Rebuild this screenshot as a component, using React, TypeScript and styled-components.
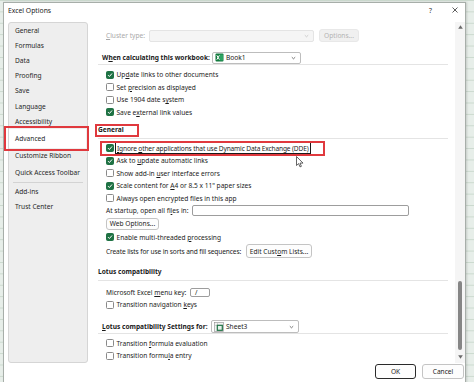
import React from "react";
import styled, { createGlobalStyle } from "styled-components";

const GlobalStyle = createGlobalStyle`
  html, body { margin: 0; padding: 0; }
  body {
    width: 474px; height: 382px; overflow: hidden;
    font-family: "Noto Sans", "Open Sans", sans-serif;
    color: #1b1b1b;
  }
  * { box-sizing: border-box; }
`;

const Screen = styled.div`
  width: 474px;
  height: 382px;
  overflow: hidden;
  padding: 2px 0 0 3px;
  background-color: #e7eee9;
  background-image: linear-gradient(#cbd9ce 1px, transparent 1px);
  background-size: 100% 11.4px;
`;

const Dialog = styled.div`
  width: 463px;
  height: 392px;
  background: #ffffff;
  border: 1px solid #a7aea9;
  box-shadow: 1px 0 2px rgba(0, 0, 0, 0.15);
  display: flex;
  flex-direction: column;
  font-size: 6.6px;
`;

const TitleBar = styled.div`
  height: 14px;
  display: flex;
  align-items: center;
  padding-left: 4px;
  font-size: 6.8px;
`;

const TitleButtons = styled.div`
  margin-left: auto;
  display: flex;
  align-items: center;
  gap: 20px;
  padding-right: 7px;
  color: #333;
`;

const Body = styled.div`
  display: flex;
  margin-top: 5px;
  height: 341px;
`;

const Nav = styled.div`
  margin-left: 4px;
  width: 80px;
  height: 341px;
  background: #eeeeee;
  border: 1px solid #d5d5d5;
  border-radius: 3px;
  display: flex;
  flex-direction: column;
`;

const NavItem = styled.div<{ $h?: number; $active?: boolean }>`
  position: relative;
  height: ${(p) => p.$h ?? 15.1}px;
  display: flex;
  align-items: center;
  padding-left: 6px;
  margin-right: 1px;
  background: ${(p) => (p.$active ? "#ffffff" : "transparent")};
  color: #262626;
`;

const NavDivider = styled.div`
  height: 1px;
  margin: 1px 4px;
  background: #d3d3d3;
`;

const RedMark = styled.span<{ $l: number; $t: number; $w: number; $h: number }>`
  position: absolute;
  left: ${(p) => p.$l}px;
  top: ${(p) => p.$t}px;
  width: ${(p) => p.$w}px;
  height: ${(p) => p.$h}px;
  border: 2px solid #e0393e;
  pointer-events: none;
`;

const Main = styled.div`
  flex: 1;
  display: flex;
  margin-left: 10px;
`;

const Content = styled.div`
  width: 350px;
  display: flex;
  flex-direction: column;
  padding-top: 7px;
`;

const Scrollbar = styled.div`
  margin-left: 7px;
  width: 10px;
  height: 341px;
  background: #f5f5f5;
  display: flex;
  flex-direction: column;
  align-items: center;
  padding: 3px 0 4px;
`;

const Thumb = styled.div`
  margin-top: auto;
  margin-bottom: 5px;
  width: 4px;
  height: 69px;
  border-radius: 2px;
  background: #868686;
`;

const Row = styled.div<{ $h?: number; $mt?: number; $indent?: number }>`
  position: relative;
  height: ${(p) => p.$h ?? 12.4}px;
  margin-top: ${(p) => p.$mt ?? 0}px;
  padding-left: ${(p) => p.$indent ?? 8}px;
  display: flex;
  align-items: center;
  white-space: nowrap;
`;

const DisabledRow = styled(Row)`
  color: #a9a9a9;
`;

const SectionHeader = styled.div<{ $mt: number; $pb?: number; $indent?: number; $h?: number }>`
  position: relative;
  margin-top: ${(p) => p.$mt}px;
  min-height: ${(p) => (p.$h ?? 12) + (p.$pb ?? 0)}px;
  padding-bottom: ${(p) => p.$pb ?? 0}px;
  padding-left: ${(p) => p.$indent ?? 0}px;
  border-bottom: 1px solid #e4e4e4;
  display: flex;
  align-items: center;
  font-weight: 700;
  white-space: nowrap;
`;

const Label = styled.span<{ $w?: number; $tight?: boolean }>`
  display: inline-block;
  width: ${(p) => (p.$w ? `${p.$w}px` : "auto")};
  flex-shrink: 0;
  letter-spacing: ${(p) => (p.$tight ? "-0.12px" : "normal")};
`;

const Box = styled.span<{ $checked?: boolean }>`
  width: 8px;
  height: 8px;
  flex-shrink: 0;
  border-radius: 1.5px;
  margin-right: 2.5px;
  display: inline-flex;
  align-items: center;
  justify-content: center;
  background: ${(p) => (p.$checked ? "#1f7244" : "#ffffff")};
  border: 1px solid ${(p) => (p.$checked ? "#1f7244" : "#8a8a8a")};
`;

const FocusText = styled.span`
  border: 1px solid #1a1a1a;
  padding: 0 1px;
  height: 12px;
  display: inline-flex;
  align-items: center;
  margin-left: -1.5px;
  letter-spacing: -0.15px;
`;

const Select = styled.div<{ $w: number; $h: number; $disabled?: boolean }>`
  width: ${(p) => p.$w}px;
  height: ${(p) => p.$h}px;
  border: 1px solid ${(p) => (p.$disabled ? "#e4e4e4" : "#bdbdbd")};
  background: ${(p) => (p.$disabled ? "#f5f5f5" : "#ffffff")};
  border-radius: 2px;
  display: flex;
  align-items: center;
  padding: 0 4px 0 2px;
  gap: 2px;
  font-weight: 400;
  color: #1b1b1b;
`;

const Chevron = styled.svg`
  margin-left: auto;
  flex-shrink: 0;
`;

const TextInput = styled.div<{ $w: number; $h: number }>`
  width: ${(p) => p.$w}px;
  height: ${(p) => p.$h}px;
  border: 1px solid #9d9d9d;
  border-radius: 2px;
  display: flex;
  align-items: center;
  padding-left: 4px;
  background: #fff;
`;

const Button = styled.div<{ $w: number; $h: number; $disabled?: boolean; $default?: boolean; $ml?: number }>`
  width: ${(p) => p.$w}px;
  height: ${(p) => p.$h}px;
  margin-left: ${(p) => p.$ml ?? 0}px;
  flex-shrink: 0;
  display: flex;
  align-items: center;
  justify-content: center;
  border-radius: 3px;
  border: ${(p) =>
    p.$default ? "1.5px solid #2a2a2a" : p.$disabled ? "1px solid #e8e8e8" : "1px solid #c4c4c4"};
  background: ${(p) => (p.$disabled ? "#f0f0f0" : "#fdfdfd")};
  color: ${(p) => (p.$disabled ? "#b3b3b3" : "#1b1b1b")};
`;

const Footer = styled.div`
  display: flex;
  justify-content: flex-end;
  gap: 6px;
  padding-right: 1px;
  margin-top: 1px;
`;

const Cursor = styled.svg`
  position: absolute;
  left: 198px;
  top: 13.5px;
`;

const Check = () => (
  <svg width="6" height="6" viewBox="0 0 6 6">
    <path d="M1 3.1 L2.4 4.5 L5 1.5" fill="none" stroke="#fff" strokeWidth="1" />
  </svg>
);

const CheckRow: React.FC<{ checked?: boolean; children: React.ReactNode; $mt?: number }> = ({
  checked,
  children,
  $mt,
}) => (
  <Row $mt={$mt}>
    <Box $checked={checked}>{checked && <Check />}</Box>
    <span>{children}</span>
  </Row>
);

const Caret: React.FC<{ color?: string }> = ({ color = "#555" }) => (
  <Chevron width="5" height="4" viewBox="0 0 5 4">
    <path d="M0.8 1.2 L2.5 2.8 L4.2 1.2" fill="none" stroke={color} strokeWidth="0.8" />
  </Chevron>
);

const ExcelIcon = () => (
  <svg width="9" height="9" viewBox="0 0 9 9">
    <rect x="0.5" y="0.5" width="8" height="8" rx="1" fill="#127a3e" />
    <rect x="4.5" y="1.5" width="3.5" height="6" fill="#2fa462" />
    <path d="M1.8 2.3 L4.4 6.7 M4.4 2.3 L1.8 6.7" stroke="#fff" strokeWidth="1" />
  </svg>
);

const SheetIcon = () => (
  <svg width="10" height="10" viewBox="0 0 10 10">
    <rect x="0.5" y="0.5" width="9" height="9" fill="#f4f4f4" stroke="#8c8c8c" strokeWidth="0.6" />
    <path d="M0.5 3.5 H9.5 M3.5 0.5 V9.5" stroke="#b0b0b0" strokeWidth="0.5" />
    <rect x="3.3" y="3.3" width="5" height="5" fill="#e6f3ea" stroke="#1f7244" strokeWidth="1.2" />
  </svg>
);

export default function App() {
  return (
    <>
      <GlobalStyle />
      <Screen>
        <Dialog>
          <TitleBar>
            <span>Excel Options</span>
            <TitleButtons>
              <span>?</span>
              <svg width="6" height="6" viewBox="0 0 6 6">
                <path d="M0.5 0.5 L5.5 5.5 M5.5 0.5 L0.5 5.5" stroke="#333" strokeWidth="0.8" />
              </svg>
            </TitleButtons>
          </TitleBar>
          <Body>
            <Nav>
              <NavItem>General</NavItem>
              <NavItem>Formulas</NavItem>
              <NavItem>Data</NavItem>
              <NavItem>Proofing</NavItem>
              <NavItem>Save</NavItem>
              <NavItem>Language</NavItem>
              <NavItem>Accessibility</NavItem>
              <NavItem $h={19} $active>
                Advanced
                <RedMark $l={-5} $t={-2.5} $w={85} $h={25} />
              </NavItem>
              <NavItem $h={16}>Customize Ribbon</NavItem>
              <NavItem $h={17}>Quick Access Toolbar</NavItem>
              <NavDivider />
              <NavItem $h={15}>Add-ins</NavItem>
              <NavItem $h={15}>Trust Center</NavItem>
            </Nav>
            <Main>
              <Content>
                <DisabledRow $h={13}>
                  <Label $w={43}>
                    <u>C</u>luster type:
                  </Label>
                  <Select $w={165} $h={12} $disabled>
                    <Caret color="#c4c4c4" />
                  </Select>
                  <Button $w={40} $h={13} $disabled $ml={5}>
                    Options...
                  </Button>
                </DisabledRow>

                <SectionHeader $mt={9.5} $indent={4}>
                  <Label $w={110}>
                    W<u>h</u>en calculating this workbook:
                  </Label>
                  <Select $w={89} $h={12}>
                    <ExcelIcon />
                    <span>Book1</span>
                    <Caret />
                  </Select>
                </SectionHeader>

                <CheckRow checked $mt={4.3}>
                  Up<u>d</u>ate links to other documents
                </CheckRow>
                <CheckRow>
                  Set <u>p</u>recision as displayed
                </CheckRow>
                <CheckRow>Use 1904 date s<u>y</u>stem</CheckRow>
                <CheckRow checked>
                  Save e<u>x</u>ternal link values
                </CheckRow>

                <SectionHeader $mt={5.6} $pb={3}>
                  General
                  <RedMark $l={-3} $t={0} $w={44} $h={13.5} />
                </SectionHeader>

                <Row $mt={3.3}>
                  <Box $checked>
                    <Check />
                  </Box>
                  <FocusText>
                    <span>
                      <u>I</u>gnore <u>o</u>ther applications that use Dynamic Data Exchange (DDE)
                    </span>
                  </FocusText>
                  <RedMark $l={2} $t={-1.3} $w={225} $h={15} />
                  <Cursor width="8" height="12" viewBox="0 0 8 12">
                    <path
                      d="M0.5 0.5 L0.5 9.5 L2.6 7.6 L4 10.9 L5.4 10.3 L4 7.1 L7 7.1 Z"
                      fill="#fff"
                      stroke="#222"
                      strokeWidth="0.7"
                      strokeLinejoin="round"
                    />
                  </Cursor>
                </Row>
                <CheckRow checked>
                  Ask to <u>u</u>pdate automatic links
                </CheckRow>
                <CheckRow>
                  Show add-in <u>u</u>ser interface errors
                </CheckRow>
                <CheckRow checked>
                  Scale content for <u>A</u>4 or 8.5 x 11" paper sizes
                </CheckRow>
                <CheckRow>Always open encrypted files in this app</CheckRow>

                <Row>
                  <Label $w={86}>
                    At startup, open all fi<u>l</u>es in:
                  </Label>
                  <TextInput $w={217} $h={11} />
                </Row>
                <Row $h={14.5}>
                  <Button $w={53} $h={12}>
                    Web Options...
                  </Button>
                </Row>
                <CheckRow checked>
                  Enable multi-threaded <u>p</u>rocessing
                </CheckRow>
                <Row $h={16}>
                  <Label $w={140} $tight>
                    Create lists for use in sorts and fill sequences:
                  </Label>
                  <Button $w={66} $h={14}>
                    <span>
                      Edit Cust<u>o</u>m Lists...
                    </span>
                  </Button>
                </Row>

                <SectionHeader $mt={6.8} $pb={3}>
                  Lotus compatibility
                </SectionHeader>

                <Row $mt={5}>
                  <Label $w={84}>
                    Microsoft Excel <u>m</u>enu key:
                  </Label>
                  <TextInput $w={20} $h={9.5}>
                    /
                  </TextInput>
                </Row>
                <CheckRow>
                  Transition navigation <u>k</u>eys
                </CheckRow>

                <SectionHeader $mt={9} $indent={4} $h={13}>
                  <Label $w={109}>
                    <u>L</u>otus compatibility Settings for:
                  </Label>
                  <Select $w={88} $h={13}>
                    <SheetIcon />
                    <span>Sheet3</span>
                    <Caret />
                  </Select>
                </SectionHeader>

                <CheckRow $mt={3}>
                  Transition <u>f</u>ormula evaluation
                </CheckRow>
                <CheckRow>
                  Transition formu<u>l</u>a entry
                </CheckRow>
              </Content>
              <Scrollbar>
                <svg width="5" height="4" viewBox="0 0 5 4">
                  <path d="M2.5 0.3 L4.8 3.7 L0.2 3.7 Z" fill="#6a6a6a" />
                </svg>
                <Thumb />
                <svg width="5" height="4" viewBox="0 0 5 4">
                  <path d="M2.5 3.7 L4.8 0.3 L0.2 0.3 Z" fill="#6a6a6a" />
                </svg>
              </Scrollbar>
            </Main>
          </Body>
          <Footer>
            <Button $w={41} $h={15} $default>
              OK
            </Button>
            <Button $w={42} $h={15}>
              Cancel
            </Button>
          </Footer>
        </Dialog>
      </Screen>
    </>
  );
}
